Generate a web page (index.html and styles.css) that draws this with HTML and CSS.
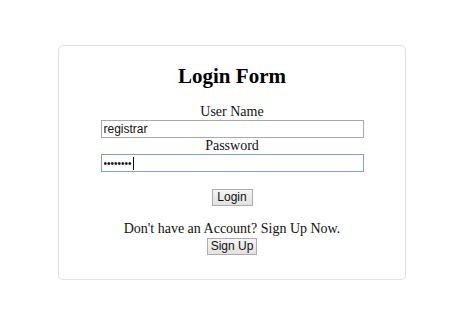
FILE: index.html
```html
<!DOCTYPE html>
<html lang="en">
<head>
<meta charset="utf-8">
<title>Login Form</title>
<link rel="stylesheet" href="styles.css">
</head>
<body>
<div class="card">
  <h2 class="title">Login Form</h2>
  <form class="login-form">
    <label class="field-label" for="username">User Name</label>
    <input class="field" id="username" type="text" value="registrar">
    <label class="field-label" for="password">Password</label>
    <div class="field-wrap">
      <input class="field field-focused" id="password" type="password" value="xxxxxxxx">
      <span class="caret"></span>
    </div>
    <div class="actions">
      <button type="button" class="btn btn-login">Login</button>
    </div>
    <p class="signup-text">Don't have an Account? Sign Up Now.</p>
    <button type="button" class="btn btn-signup">Sign Up</button>
  </form>
</div>
</body>
</html>
```

FILE: styles.css
```css
html, body {
  margin: 0;
  padding: 0;
  background: #ffffff;
}

body {
  font-family: "Liberation Serif", "Times New Roman", serif;
  color: #111;
}

.card {
  box-sizing: border-box;
  width: 348px;
  height: 235px;
  margin: 45px 0 0 58px;
  padding-top: 18px;
  border: 1px solid #e2e2e2;
  border-radius: 5px;
  text-align: center;
}

.title {
  margin: 0;
  font-size: 21px;
  line-height: 24px;
  font-weight: 700;
  color: #000;
}

.login-form {
  margin-top: 16px;
  display: flex;
  flex-direction: column;
  align-items: center;
}

.field-label {
  display: block;
  font-size: 14px;
  line-height: 16px;
}

.field-wrap {
  position: relative;
  width: 263px;
}

.field {
  box-sizing: border-box;
  display: block;
  width: 263px;
  height: 18px;
  margin: 0;
  padding: 0 2px;
  border: 1px solid #aaaaaa;
  border-radius: 0;
  background: #fff;
  font-family: "Liberation Sans", Arial, sans-serif;
  font-size: 12px;
  color: #111;
  outline: none;
}

.field-focused {
  border-color: #7f9fd6;
  font-size: 10px;
}

.caret {
  position: absolute;
  left: 32px;
  top: 3px;
  width: 1px;
  height: 13px;
  background: #000;
}

.actions {
  margin-top: 15px;
}

.btn {
  box-sizing: border-box;
  height: 17px;
  margin: 0;
  padding: 0;
  border: 1px solid #adadad;
  border-radius: 0;
  background: linear-gradient(#f4f4f4, #e2e2e2);
  font-family: "Liberation Sans", Arial, sans-serif;
  font-size: 12px;
  line-height: 15px;
  color: #111;
}

.btn-login {
  width: 41px;
}

.btn-signup {
  width: 50px;
  margin-top: 1px;
}

.signup-text {
  margin: 14px 0 0;
  font-size: 14px;
  line-height: 17px;
}
```
